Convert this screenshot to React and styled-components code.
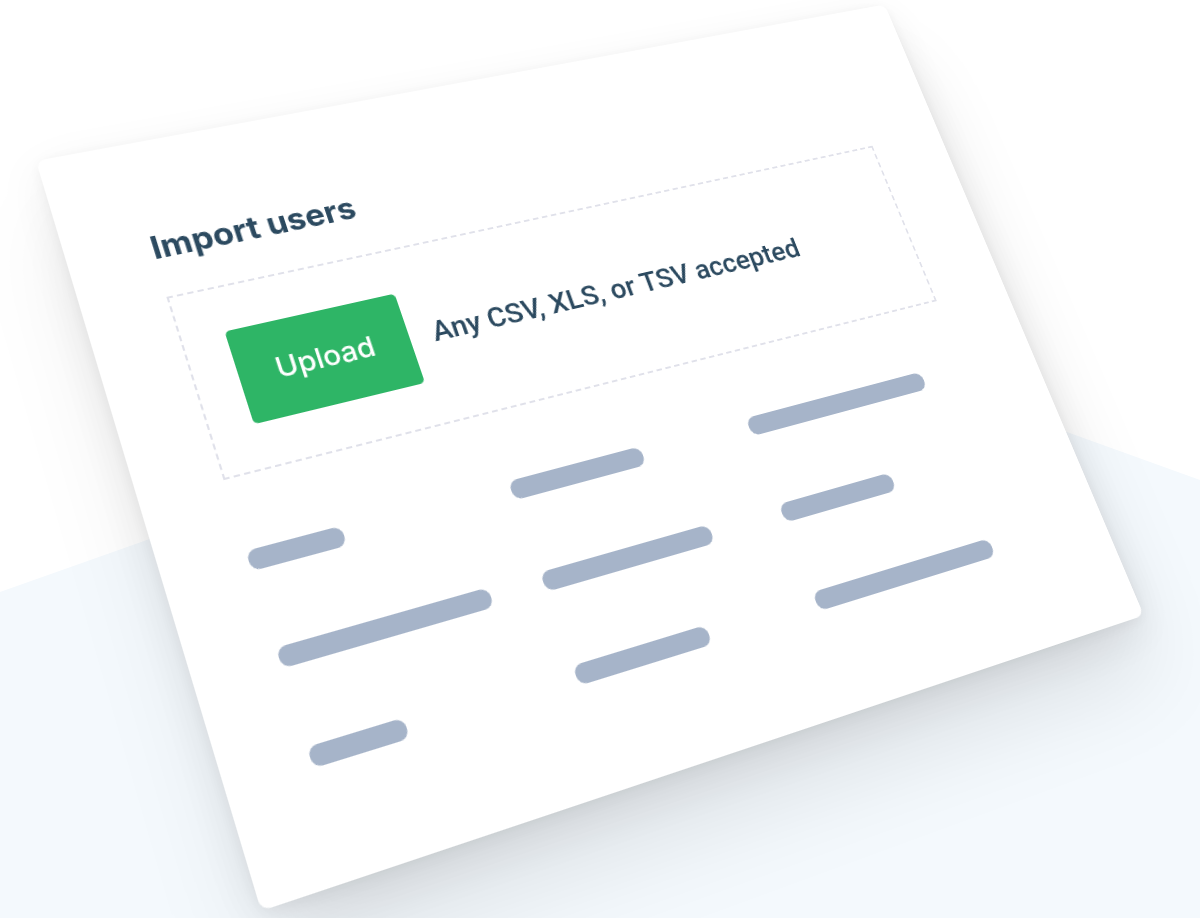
import React from "react";
import styled, { createGlobalStyle } from "styled-components";

const GlobalStyle = createGlobalStyle`
  *, *::before, *::after {
    box-sizing: border-box;
  }

  body {
    margin: 0;
    background: #ffffff;
    color: #2c4a60;
    font-family: Roboto, Arial, sans-serif;
  }
`;

const Scene = styled.main`
  position: relative;
  display: flex;
  align-items: center;
  justify-content: center;
  min-height: 100vh;
  overflow: hidden;
  perspective: 1904px;
`;

const Hill = styled.div`
  position: absolute;
  inset: 0;
  background: #f4f9fd;
  clip-path: polygon(
    0 64.5%,
    12.3% 58.8%,
    51% 41%,
    75% 40.6%,
    89.2% 47.2%,
    100% 52.3%,
    100% 100%,
    0 100%
  );
`;

const Card = styled.section`
  flex: none;
  width: 952px;
  min-height: 740px;
  padding: 92px 86px 93px 80px;
  border-radius: 9px;
  background: #ffffff;
  box-shadow:
    0 60px 90px -10px rgba(0, 0, 0, 0.1),
    0 15px 50px rgba(0, 0, 0, 0.07),
    0 3px 16px rgba(0, 0, 0, 0.06);
  transform: translate(14px, -61px) rotateX(19.51deg) rotateY(15.43deg) rotateZ(-20.12deg);
`;

const Title = styled.h1`
  margin: 0 0 32px;
  font: 700 33px/40px Inter, sans-serif;
`;

const DropZone = styled.div`
  display: flex;
  align-items: center;
  gap: 24px;
  height: 190px;
  padding: 0 41px;
  border: 2px dashed #e0e1ea;
`;

const UploadButton = styled.button`
  width: 172px;
  height: 97px;
  border: 0;
  border-radius: 5px;
  background: #2eb566;
  color: #ffffff;
  font: 500 29px/40px Inter, sans-serif;
  cursor: pointer;
`;

const Hint = styled.p`
  margin: 0;
  font-size: 30px;
  font-weight: 500;
  line-height: 40px;
  white-space: nowrap;
`;

const Rows = styled.div`
  display: grid;
  grid-template-columns: repeat(3, 1fr);
  row-gap: 75px;
  margin-top: 71px;
`;

const Bar = styled.span`
  width: ${({ $width }) => $width}px;
  height: 20px;
  border-radius: 9px;
  background: #a6b4c9;
`;

const barWidths = [92, 142, 210, 208, 182, 131, 92, 142, 210];

export default function App() {
  return (
    <>
      <GlobalStyle />
      <Scene>
        <Hill />
        <Card aria-labelledby="import-title">
          <Title id="import-title">Import users</Title>
          <DropZone>
            <UploadButton type="button" aria-describedby="formats">
              Upload
            </UploadButton>
            <Hint id="formats">Any CSV, XLS, or TSV accepted</Hint>
          </DropZone>
          <Rows aria-hidden="true">
            {barWidths.map((width, index) => (
              <Bar key={index} $width={width} />
            ))}
          </Rows>
        </Card>
      </Scene>
    </>
  );
}
